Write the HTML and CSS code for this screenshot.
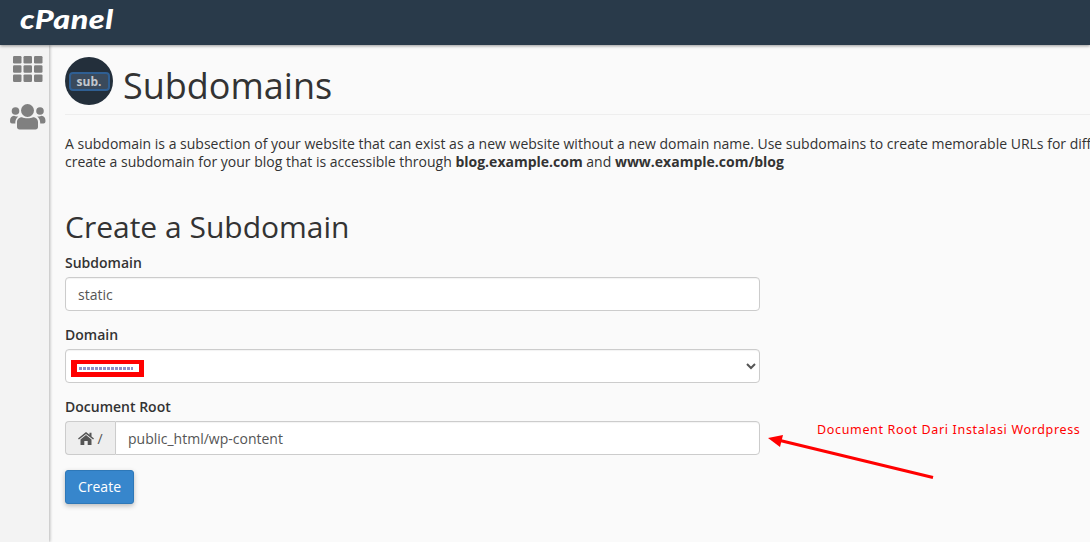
FILE: index.html
```html
<!DOCTYPE html>
<html lang="en">
<head>
<meta charset="utf-8">
<title>Subdomains</title>
<link rel="stylesheet" href="styles.css">
</head>
<body>
<header class="topbar"><span class="logo">cPanel</span></header>
<div class="shell">
  <nav class="sidebar">
    <svg class="grid-icon" viewBox="0 0 30 26" width="30" height="26">
      <g fill="#808080">
        <rect x="0" y="0" width="8.500" height="7.500" rx="1.200"/><rect x="10.500" y="0" width="8.500" height="7.500" rx="1.200"/><rect x="21" y="0" width="8.500" height="7.500" rx="1.200"/>
        <rect x="0" y="9.200" width="8.500" height="7.500" rx="1.200"/><rect x="10.500" y="9.200" width="8.500" height="7.500" rx="1.200"/><rect x="21" y="9.200" width="8.500" height="7.500" rx="1.200"/>
        <rect x="0" y="18.400" width="8.500" height="7.500" rx="1.200"/><rect x="10.500" y="18.400" width="8.500" height="7.500" rx="1.200"/><rect x="21" y="18.400" width="8.500" height="7.500" rx="1.200"/>
      </g>
    </svg>
    <svg class="users-icon" viewBox="0 0 36 26" width="36" height="26">
      <g fill="#808080">
        <circle cx="17.500" cy="6.500" r="6.500"/>
        <circle cx="5.500" cy="7" r="3.800"/>
        <circle cx="30" cy="7" r="3.800"/>
        <path d="M7 23v-5c0-3 2.500-4.800 5-4.800 2.500 1.300 8.500 1.300 11 0 2.500 0 5 1.800 5 4.800v5c0 1.500-1 2.500-2.500 2.500h-16C8 25.500 7 24.500 7 23z"/>
        <path d="M0 17c0-3 1.500-5.200 4-5.200 1.200.8 2.800 1 4.300.6C6.400 14 5.300 16 5.300 18.800v.7H2c-1.200 0-2-.8-2-2.500z"/>
        <path d="M35.500 17c0-3-1.500-5.200-4-5.200-1.200.8-2.800 1-4.300.6 1.900 1.600 3 3.600 3 6.400v.7h3.300c1.200 0 2-.8 2-2.500z"/>
      </g>
    </svg>
  </nav>
  <main class="content">
    <div class="page-head">
      <div class="badge"><span class="badge-text">sub.</span></div>
      <h1 class="page-title">Subdomains</h1>
    </div>
    <p class="intro">A subdomain is a subsection of your website that can exist as a new website without a new domain name. Use subdomains to create memorable URLs for different content areas of your site.<br>create a subdomain for your blog that is accessible through <b>blog.example.com</b> and <b>www.example.com/blog</b></p>
    <h2 class="section-title">Create a Subdomain</h2>
    <form class="form">
      <div class="field">
        <label class="label" for="sub">Subdomain</label>
        <input class="control" id="sub" type="text" value="static">
      </div>
      <div class="field">
        <label class="label" for="dom">Domain</label>
        <div class="select-wrap">
          <select class="control select" id="dom"><option></option></select>
          <span class="redact"><span class="redact-dots"></span></span>
        </div>
      </div>
      <div class="field">
        <label class="label" for="root">Document Root</label>
        <div class="group">
          <span class="addon">
            <svg viewBox="0 0 16 13" width="16" height="13"><path fill="#555" d="M8 0 0 6.600l.9 1L8 1.900l7.100 5.700.9-1L13.500 4.500V.8h-2v2L8 0zM8 3 2.500 7.500V13h3.800V9h3.400v4h3.800V7.500L8 3z"/></svg>
            <span>/</span>
          </span>
          <input class="control group-input" id="root" type="text" value="public_html/wp-content">
        </div>
      </div>
      <button class="btn" type="button">Create</button>
    </form>
    <span class="note">Document Root Dari Instalasi Wordpress</span>
    <svg class="arrow" width="180" height="60" viewBox="0 0 180 60">
      <path d="M165 42.500 9 4.800" stroke="#f00" stroke-width="3" fill="none"/>
      <path d="M0 3 15 0 12 12z" fill="#f00"/>
    </svg>
  </main>
</div>
</body>
</html>
```
FILE: styles.css
```css
* { box-sizing: border-box; }
html, body { margin: 0; height: 100%; overflow: hidden; }
body { font-family: "Open Sans", sans-serif; font-size: 14px; color: #333; background: #fafafa; display: flex; flex-direction: column; }
.topbar { height: 45px; flex: none; background: #293a4a; padding-left: 20px; box-shadow: 0 1px 3px rgba(0,0,0,.4); position: relative; z-index: 2; }
.logo { font-family: "Lato", sans-serif; font-style: italic; font-weight: 900; font-size: 26px; line-height: 38px; color: #fff; letter-spacing: .4px; display: block; width: 80px; transform: scaleX(1.24); transform-origin: left center; }
.shell { flex: 1; display: flex; min-height: 0; }
.sidebar { width: 49px; flex: none; background: #f3f3f3; box-shadow: 1px 0 3px rgba(0,0,0,.28); display: flex; flex-direction: column; align-items: center; padding-top: 11px; gap: 22px; position: relative; z-index: 1; }
.sidebar svg { display: block; }
.grid-icon { margin-left: 6px; }
.users-icon { margin-left: 6px; }
.content { flex: 1; padding: 12px 0 0 16px; position: relative; min-width: 0; overflow: hidden; }
.page-head { display: flex; align-items: flex-start; gap: 10px; height: 58px; border-bottom: 1px solid #eee; }
.badge { width: 48px; height: 48px; border-radius: 50%; background: #232f3b; flex: none; display: flex; align-items: center; justify-content: center; }
.badge-text { width: 41px; height: 19px; border: 2px solid #2f5f93; border-radius: 4px; background: #3a4a5c; color: #c3c8ce; font-size: 12px; font-weight: 700; line-height: 15px; text-align: center; display: block; }
.page-title { margin: 9px 0 0; font-size: 36px; font-weight: 400; line-height: 40px; color: #333; }
.intro { margin: 20px 0 0; width: 1300px; line-height: 18px; font-size: 14px; white-space: nowrap; }
.section-title { margin: 36px 0 0; font-size: 30px; font-weight: 400; line-height: 40px; color: #333; }
.form { width: 695px; margin-top: 6px; }
.field { margin-bottom: 14px; }
.label { display: block; font-weight: 600; font-size: 14px; line-height: 20px; margin-bottom: 4px; }
.control { display: block; width: 100%; height: 34px; padding: 6px 12px; border: 1px solid #ccc; border-radius: 4px; background: #fff; font: 14px/20px "Open Sans", sans-serif; color: #555; box-shadow: inset 0 1px 1px rgba(0,0,0,.05); outline: 0; }
.select-wrap { position: relative; }
.select { padding: 6px 8px; }
.redact { position: absolute; left: 6px; top: 11px; width: 73px; height: 17px; border: solid #f00; border-width: 4px 5px 5px 6px; background: #fff; display: flex; align-items: center; padding: 0 2px; }
.redact-dots { width: 54px; height: 3px; background: repeating-linear-gradient(90deg, #8f8fc8 0 3px, #fff 3px 4px); }
.group { display: flex; }
.addon { width: 50px; height: 34px; flex: none; display: flex; align-items: center; justify-content: center; gap: 3px; background: #eee; border: 1px solid #ccc; border-right: 0; border-radius: 4px 0 0 4px; color: #555; }
.group-input { flex: 1; border-radius: 0 4px 4px 0; width: auto; min-width: 0; }
.btn { display: block; margin-top: 15px; width: 69px; height: 34px; background: #3786cc; border: 1px solid #2e78b8; border-radius: 3px; color: #fff; font: 14px/20px "Open Sans", sans-serif; box-shadow: 0 2px 5px rgba(0,0,0,.25); padding: 0; }
.note { position: absolute; left: 768px; top: 376px; color: #f00; font-family: "Noto Sans", sans-serif; font-size: 12.5px; line-height: 18px; letter-spacing: .66px; white-space: nowrap; }
.arrow { position: absolute; left: 719px; top: 390px; }
```
